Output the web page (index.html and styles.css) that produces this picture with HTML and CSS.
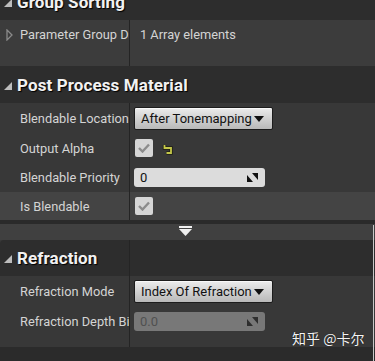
FILE: index.html
```html
<!DOCTYPE html>
<html>
<head>
<meta charset="utf-8">
<link rel="stylesheet" href="styles.css">
</head>
<body>
<div class="panel">
  <div class="cat cat-top">
    <svg class="tri" width="10" height="10" viewBox="0 0 10 10"><polygon points="9,1 9,9 1,9" fill="#bdbdbd"/></svg>
    <span class="cat-title">Group Sorting</span>
  </div>
  <div class="row row-param">
    <div class="label">
      <svg class="collapsed" width="7" height="12" viewBox="0 0 7 12"><polygon points="1,1 6,6 1,11" fill="none" stroke="#8a8a8a" stroke-width="1.3"/></svg>
      <span class="clip">Parameter Group Data</span>
    </div>
    <div class="value"><span class="vtext">1 Array elements</span></div>
  </div>
  <div class="cat cat-post">
    <svg class="tri" width="10" height="10" viewBox="0 0 10 10"><polygon points="9,1 9,9 1,9" fill="#bdbdbd"/></svg>
    <span class="cat-title">Post Process Material</span>
  </div>
  <div class="row h30">
    <div class="label"><span class="clip">Blendable Location</span></div>
    <div class="value"><div class="combo w138">After Tonemapping<span class="arrow"></span></div></div>
  </div>
  <div class="row h30">
    <div class="label"><span class="clip">Output Alpha</span></div>
    <div class="value">
      <div class="check"><svg width="12" height="10" viewBox="0 0 12 10"><polyline points="1,5 4.5,8.5 11,1.5" fill="none" stroke="#8c8c8c" stroke-width="2.4"/></svg></div>
      <svg class="reset" width="12" height="11" viewBox="0 0 12 11"><path d="M2.5 1 V4 H9 V9 H4.5" fill="none" stroke="#1e1e10" stroke-width="3.4"/><path d="M2.5 1 V4 H9 V9 H4.5" fill="none" stroke="#c4c74a" stroke-width="1.8"/></svg>
    </div>
  </div>
  <div class="row h29">
    <div class="label"><span class="clip">Blendable Priority</span></div>
    <div class="value">
      <div class="spin"><span>0</span>
        <svg class="spinicon" width="11" height="9" viewBox="0 0 11 9"><polygon points="0,2 0,9 6,9" fill="#111"/><polygon points="5,0 11,0 11,7" fill="#111"/></svg>
      </div>
    </div>
  </div>
  <div class="row h28 hl">
    <div class="label"><span class="clip">Is Blendable</span></div>
    <div class="value">
      <div class="check"><svg width="12" height="10" viewBox="0 0 12 10"><polyline points="1,5 4.5,8.5 11,1.5" fill="none" stroke="#8c8c8c" stroke-width="2.4"/></svg></div>
    </div>
  </div>
  <div class="sep"></div>
  <div class="expand">
    <svg width="13" height="11" viewBox="0 0 13 11"><rect x="0" y="0" width="13" height="2" fill="#f0f0f0"/><polygon points="0,3 13,3 6.5,10" fill="#f0f0f0"/></svg>
  </div>
  <div class="cat cat-refr">
    <svg class="tri" width="10" height="10" viewBox="0 0 10 10"><polygon points="9,1 9,9 1,9" fill="#bdbdbd"/></svg>
    <span class="cat-title">Refraction</span>
    <div class="catdiv"></div>
  </div>
  <div class="row h30">
    <div class="label"><span class="clip">Refraction Mode</span></div>
    <div class="value"><div class="combo w138">Index Of Refraction<span class="arrow"></span></div></div>
  </div>
  <div class="row h31">
    <div class="label"><span class="clip">Refraction Depth Bias</span></div>
    <div class="value">
      <div class="spin disabled"><span>0.0</span>
        <svg class="spinicon" width="11" height="9" viewBox="0 0 11 9"><polygon points="0,2 0,9 6,9" fill="#2e2e2e"/><polygon points="5,0 11,0 11,7" fill="#2e2e2e"/></svg>
      </div>
    </div>
  </div>
  <div class="row h10">
    <div class="label"></div>
    <div class="value"></div>
  </div>
  <div class="bottom"></div>
  <div class="edge"></div>
  <div class="watermark">知乎 @卡尔</div>
</div>
</body>
</html>
```

FILE: styles.css
```css
* { box-sizing: border-box; }
html, body { margin: 0; padding: 0; }
body {
  width: 375px;
  height: 361px;
  overflow: hidden;
  background: #383838;
  font-family: Roboto, "Noto Sans", sans-serif;
}
.panel {
  position: relative;
  width: 375px;
  height: 361px;
  display: flex;
  flex-direction: column;
  overflow: hidden;
}
.cat {
  position: relative;
  display: flex;
  align-items: center;
  background: #2d2d2d;
  flex-shrink: 0;
}
.cat-top {
  height: 36px;
  margin-top: -16px;
}
.cat-post { height: 37px; }
.cat-refr {
  height: 36px;
  border-top-left-radius: 4px;
}
.tri {
  margin-left: 3px;
  margin-right: 4px;
  margin-top: 2px;
}
.cat-title {
  color: #f2f2f2;
  font-weight: 700;
  font-size: 17px;
  text-shadow: 1px 1px 1px #000;
  letter-spacing: 0.1px;
}
.catdiv {
  position: absolute;
  left: 129px;
  top: 0;
  bottom: 0;
  width: 1px;
  background: #242424;
}
.row {
  display: flex;
  flex-shrink: 0;
  background: #383838;
}
.row-param {
  height: 46px;
  background: #3c3c3c;
  align-items: flex-start;
}
.row-param .label,
.row-param .value {
  align-self: stretch;
  align-items: flex-start;
  padding-top: 7px;
}
.h30 { height: 30px; }
.h29 { height: 29px; }
.h28 { height: 28px; }
.h31 { height: 31px; }
.h10 { height: 10px; }
.hl { background: #444444; }
.label {
  border-right: 1px solid #242424;
  width: 130px;
  display: flex;
  align-items: center;
  padding-left: 20px;
  position: relative;
  overflow: hidden;
}
.collapsed {
  position: absolute;
  left: 6px;
  top: 9px;
}
.clip {
  color: #d4d4d4;
  font-size: 12.8px;
  white-space: nowrap;
}
.value {
  flex: 1;
  display: flex;
  align-items: center;
  padding-left: 4px;
}
.vtext {
  color: #d4d4d4;
  font-size: 12.8px;
  padding-left: 6px;
}
.combo {
  height: 23px;
  border: 1px solid #1c1c1c;
  border-radius: 2px;
  background: linear-gradient(#ececec, #cfcfcf 55%, #b9b9b9);
  color: #111;
  font-size: 13px;
  display: flex;
  align-items: center;
  padding-left: 6px;
  box-shadow: inset 0 1px 0 #f8f8f8;
}
.w138 { width: 139px; }
.arrow {
  width: 0;
  height: 0;
  border-left: 5.5px solid transparent;
  border-right: 5.5px solid transparent;
  border-top: 6px solid #111;
  margin-left: 2px;
  margin-top: 1px;
}
.check {
  width: 18px;
  height: 18px;
  margin-left: 1px;
  background: #d6d6d6;
  border-radius: 2px;
  display: flex;
  align-items: center;
  justify-content: center;
}
.reset {
  margin-left: 9px;
  margin-top: 2px;
}
.spin {
  width: 131px;
  height: 19px;
  border-radius: 3px;
  background: #dcdcdc;
  color: #111;
  font-size: 13px;
  display: flex;
  align-items: center;
  justify-content: space-between;
  padding: 0 7px 0 6px;
}
.spin.disabled {
  background: #787878;
  color: #505050;
}
.sep {
  height: 4px;
  background: #2a2a2a;
  flex-shrink: 0;
}
.expand {
  height: 16px;
  background: #404040;
  display: flex;
  justify-content: center;
  align-items: flex-start;
  padding-top: 2px;
  padding-right: 5px;
  flex-shrink: 0;
}
.bottom {
  flex: 1;
  background: #2b2b2b;
}
.edge {
  position: absolute;
  right: 1px;
  top: 225px;
  bottom: 0;
  width: 1px;
  background: #c8c8c8;
}
.watermark {
  position: absolute;
  left: 292px;
  top: 328px;
  color: #f4f4f4;
  font-size: 14px;
  font-family: "Noto Sans CJK SC", sans-serif;
  text-shadow: 0 0 1px #000;
}
```
